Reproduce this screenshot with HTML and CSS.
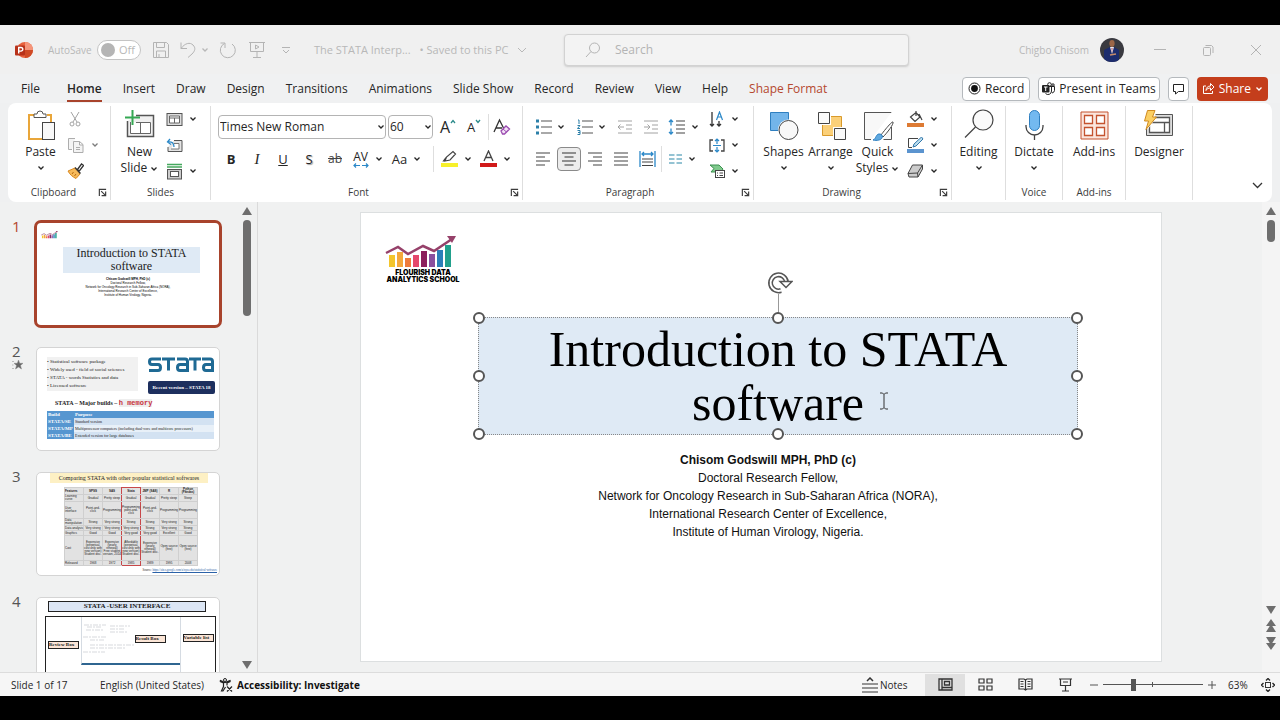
FILE: index.html
```html
<!DOCTYPE html>
<html lang="en">
<head>
<meta charset="utf-8">
<title>The STATA Interp... - PowerPoint</title>
<link rel="stylesheet" href="styles.css">
</head>
<body>
<svg class="defs" aria-hidden="true">
  <symbol id="chev" viewBox="0 0 8 6"><path d="M1.5 1.5 4 4l2.500-2.500" fill="none" stroke="currentColor" stroke-width="1.300"/></symbol>
  <symbol id="launch" viewBox="0 0 10 10"><path d="M1.500 9V1.500H9M3.500 3.500 8 8M8.500 4v4.500H4" fill="none" stroke="currentColor" stroke-width="1.300"/></symbol>
  <symbol id="up" viewBox="0 0 10 8"><path d="M5 0 10 8H0z" fill="currentColor"/></symbol>
  <symbol id="down" viewBox="0 0 10 8"><path d="M5 8 10 0H0z" fill="currentColor"/></symbol>
  <symbol id="brand" viewBox="0 0 76 36">
    <path d="M4 20h6v12H4z" fill="#f3c52c"/><path d="M12 17h6v15h-6z" fill="#f4a83c"/><path d="M20 23h6v9h-6z" fill="#ee7b3a"/><path d="M28 20h6v12h-6z" fill="#e5476b"/><path d="M36 16h6v16h-6z" fill="#8c1f5c"/><path d="M44 19h6v13h-6z" fill="#8a4f9e"/><path d="M52 15h6v17h-6z" fill="#2b7fb8"/><path d="M60 10h6v22h-6z" fill="#21a08c"/>
    <path d="M1 18 13 12l10 7 15-8 11 5 18-12" fill="none" stroke="#96416a" stroke-width="2.500"/><path d="M62 1h9l-4 7z" fill="#96416a"/>
  </symbol>
</svg>

<div class="app">
<header class="titlebar">
  <svg class="applogo" viewBox="0 0 18 18"><circle cx="10" cy="9" r="8" fill="#e8613d"/><path d="M10 1a8 8 0 0 1 8 8h-8z" fill="#f5957a"/><path d="M10 17a8 8 0 0 0 8-8h-8z" fill="#cf4a25"/><rect y="4.500" width="10" height="10" rx="1" fill="#b8321a"/><path d="M3.700 12.500v-6H6a1.800 1.800 0 0 1 0 3.600H3.700" fill="none" stroke="#fff" stroke-width="1.400"/></svg>
  <label class="autosave" for="autosave">AutoSave</label>
  <button class="toggle" id="autosave" role="switch" aria-checked="false"><i></i>Off</button>
  <div class="qat">
    <button aria-label="Save"><svg width="18" height="18" viewBox="0 0 18 18"><path d="M1.500 1.500h13l2 2v13h-15zM4.500 1.500v5h8v-5M4.500 16v-6h9v6M7 16v-3" /></svg></button>
    <button class="undo" aria-label="Undo"><svg width="18" height="18" viewBox="0 0 18 18"><path d="M2 1.500v6h6M2 7.500C6 2 11 1 14 4s2 6-1 9l-4 3.500"/></svg><svg class="chev"><use href="#chev"/></svg></button>
    <button aria-label="Redo"><svg width="18" height="18" viewBox="0 0 18 18"><path d="M5.500 2.500A7.500 7.500 0 1 0 13 3M1.500 2h4.500v5"/></svg></button>
    <button class="present" aria-label="From beginning"><svg width="18" height="18" viewBox="0 0 18 18"><path d="M1 1.500h16M2.500 1.500v9h13v-9M9 10.500v6M5 16.500h8M7.500 4v4l3.500-2z"/></svg></button>
    <button class="more" aria-label="Customize"><svg width="10" height="10" viewBox="0 0 10 10"><path d="M1 2.500h8M2 5l3 3 3-3"/></svg></button>
  </div>
  <button class="docname"><span>The STATA Interp...</span><span>• Saved to this PC</span><svg width="10" height="6" viewBox="0 0 10 6"><path d="m1 1 4 4 4-4" fill="none" stroke="currentColor"/></svg></button>
  <label class="search"><svg width="16" height="16" viewBox="0 0 16 16"><circle cx="9.500" cy="6" r="5"/><path d="M6 9.500 1 15"/></svg><input type="text" placeholder="Search" aria-label="Search"></label>
  <div class="account"><span>Chigbo Chisom</span>
    <svg width="24" height="24" viewBox="0 0 24 24"><defs><clipPath id="av"><circle cx="12" cy="12" r="12"/></clipPath></defs><g clip-path="url(#av)"><path d="M0 0h24v24H0z" fill="#3a3a40"/><path d="M4 24V12l6-3h4l5 3v12z" fill="#1c2c6e"/><path d="m10 9 2 7 2-7z" fill="#e8e8f0"/><path d="m11.500 10 .5 5 .5-5z" fill="#a33"/><ellipse cx="12" cy="5.500" rx="2.600" ry="3.400" fill="#9c6647"/><path d="m10 17 6-1" stroke="#c48a6a" stroke-width="1.500"/></g></svg>
  </div>
  <div class="winctl">
    <button aria-label="Minimize"><svg width="12" height="12" viewBox="0 0 12 12"><path d="M0 5.500h12"/></svg></button>
    <button aria-label="Restore"><svg width="12" height="12" viewBox="0 0 12 12"><rect x="1.500" y="3.500" width="7" height="8" rx="1"/><path d="M3.500 1.500h6l1.500 1.500v6"/></svg></button>
    <button aria-label="Close"><svg width="12" height="12" viewBox="0 0 12 12"><path d="m1 1 10 10M11 1 1 11"/></svg></button>
  </div>
</header>

<nav class="tabs">
  <button>File</button><button class="active">Home</button><button>Insert</button><button>Draw</button><button>Design</button><button>Transitions</button><button>Animations</button><button>Slide Show</button><button>Record</button><button>Review</button><button>View</button><button>Help</button><button class="context">Shape Format</button>
  <div class="actions">
    <button class="outlined"><svg width="13" height="13" viewBox="0 0 13 13"><circle cx="6.500" cy="6.500" r="5.500" fill="none" stroke="#222"/><circle cx="6.500" cy="6.500" r="3.400" fill="#111"/></svg>Record</button>
    <button class="outlined teams"><svg width="13" height="13" viewBox="0 0 13 13"><circle cx="7.500" cy="2.500" r="1.800" fill="none" stroke="#222"/><circle cx="11" cy="3" r="1.200" fill="none" stroke="#222"/><path d="M6 4.500h6.500v4A3 3 0 0 1 10 11M9.500 5v4a3.500 3.500 0 0 1-6 2.500" fill="none" stroke="#222"/><rect y="3" width="7.500" height="7.500" rx="1" fill="#222"/><path d="M2 5h3.500M3.700 5v4" stroke="#fff"/></svg>Present in Teams</button>
    <button class="outlined comment" aria-label="Comments"><svg width="13" height="12" viewBox="0 0 13 12"><path d="M1.500 1.500h10v7h-5l-3 2.500V8.500h-2z" fill="none" stroke="#222"/></svg></button>
    <button class="share"><svg width="13" height="13" viewBox="0 0 13 13"><path d="M4 4H1.500v7.500h9V9M4 8.500C4 5.500 6 4 8.500 4V1.500l3.500 3.500-3.500 3.500V6C6.500 6 5 6.500 4 8.500z" fill="none" stroke="#fff"/></svg>Share<svg class="chev"><use href="#chev"/></svg></button>
  </div>
</nav>

<section class="ribbon">
  <div class="group g-clip">
    <div class="tools">
      <button class="big"><svg width="32" height="32" viewBox="0 0 32 32"><path d="M9 6H4v24h13M22 6h4v7" fill="none" stroke="#e9a63a" stroke-width="2"/><path d="M9 8.500h12V5h-3a3 3 0 0 0-6 0H9z" fill="#fff" stroke="#555"/><rect x="17.500" y="13.500" width="12" height="17" fill="#f8f8f8" stroke="#444"/></svg><span>Paste</span><svg class="chev"><use href="#chev"/></svg></button>
      <div class="stack">
        <button class="off" aria-label="Cut"><svg width="16" height="16" viewBox="0 0 16 16"><path d="m4 1 6 10M12 1 6 11" fill="none" stroke="#666"/><circle cx="5" cy="13" r="2" fill="none" stroke="#666"/><circle cx="11" cy="13" r="2" fill="none" stroke="#666"/></svg></button>
        <button class="off" aria-label="Copy"><svg width="18" height="16" viewBox="0 0 18 16"><path d="M5 12.500H1.500v-11H8M6.500 4.500h6l3.500 3v8H6.500zM12.500 4.500v3.500H16M9 10.500h4M9 12.500h4" fill="#eee" stroke="#777"/></svg><svg class="chev"><use href="#chev"/></svg></button>
        <button aria-label="Format painter"><svg width="17" height="16" viewBox="0 0 17 16"><path d="m1 8 7-3 5 6-4 4.500C6 14 3 12 1 8z" fill="#f6b95a" stroke="#d98a22"/><path d="m5 11 1.500-2M7.500 13 9 11" stroke="#b56a10"/><path d="m8 4.500 5.500 6M10.500 6.500 14.500 1l2 1.500-4.500 6z" fill="#fff" stroke="#333" stroke-width="1.300"/></svg></button>
      </div>
    </div>
    <footer>Clipboard<svg class="launch"><use href="#launch"/></svg></footer>
  </div>

  <div class="group g-slides">
    <div class="tools">
      <button class="big"><svg width="32" height="32" viewBox="0 0 32 32"><path d="M3.500 12v15.500h26v-21H12" fill="#f0f0f0" stroke="#555" stroke-width="1.500"/><path d="M6.500 13v11.500h20v-11H12M16.500 13.500v11" fill="#fff" stroke="#666"/><path d="M8.500 1v15M1 8.500h15" stroke="#35a853" stroke-width="2"/></svg><span>New</span><span>Slide <svg class="chev"><use href="#chev"/></svg></span></button>
      <div class="stack">
        <button aria-label="Layout"><svg width="17" height="15" viewBox="0 0 17 15"><rect x="1" y="1.500" width="15" height="12" fill="#ddd" stroke="#555"/><path d="M3.500 4h10v7h-10zM3.500 6h10M8.500 6v5" fill="#fff" stroke="#666"/></svg><svg class="chev"><use href="#chev"/></svg></button>
        <button aria-label="Reset"><svg width="17" height="15" viewBox="0 0 17 15"><path d="M8 2.500h8v11H2V9" fill="#e4e4e4" stroke="#555"/><path d="M8 5.500h5v5.500H5" fill="#fff" stroke="#777"/><path d="M4 1 1.500 4 5 6.500M2 4c4-.5 6 1 6 5" fill="none" stroke="#2b88c8" stroke-width="1.300"/></svg></button>
        <button aria-label="Section"><svg width="17" height="17" viewBox="0 0 17 17"><path d="M1 1.500h15M1 4h15" stroke="#45a85e" stroke-width="1.500"/><rect x="1.500" y="6.500" width="14" height="9.500" fill="#ccc" stroke="#555"/><rect x="4.500" y="8.500" width="8" height="5" fill="#fff" stroke="#555"/></svg><svg class="chev"><use href="#chev"/></svg></button>
      </div>
    </div>
    <footer>Slides</footer>
  </div>

  <div class="group g-font">
    <div class="tools rows">
      <div class="row">
        <span class="combo family"><select aria-label="Font"><option>Times New Roman</option></select><svg class="chev"><use href="#chev"/></svg></span>
        <span class="combo size"><select aria-label="Font size"><option>60</option></select><svg class="chev"><use href="#chev"/></svg></span>
        <button class="ic grow" aria-label="Increase font size">A<svg width="6" height="5" viewBox="0 0 6 5"><path d="m1 4 2-2.500L5 4" fill="none" stroke="#2b8a8a" stroke-width="1.300"/></svg></button>
        <button class="ic shrink" aria-label="Decrease font size">A<svg width="6" height="5" viewBox="0 0 6 5"><path d="m1 1 2 2.500L5 1" fill="none" stroke="#2b8a8a" stroke-width="1.300"/></svg></button>
        <i class="sep"></i>
        <button class="ic clear" aria-label="Clear formatting"><svg width="18" height="18" viewBox="0 0 18 18"><path d="M1 14 6.500 2 11 11M3 10h6" fill="none" stroke="#333" stroke-width="1.300"/><path d="m8 13 5-5 3.500 3-5 5H9.500z" fill="#f2e2f6" stroke="#9b4bb0" stroke-width="1.300"/><path d="m10 11 3.500 3" stroke="#9b4bb0"/></svg></button>
      </div>
      <div class="row">
        <button class="ic b">B</button><button class="ic i">I</button><button class="ic u">U</button><button class="ic s">S</button><button class="ic st">ab</button>
        <button class="ic wide" aria-label="Character spacing"><span class="av">AV<svg width="16" height="5" viewBox="0 0 16 5"><path d="M3 .5 1 2.500l2 2M1 2.500h6M9 2.500h6M13 .5l2 2-2 2" fill="none" stroke="#2b88c8" stroke-width="1.200"/></svg></span><svg class="chev"><use href="#chev"/></svg></button>
        <button class="ic wide case">Aa<svg class="chev"><use href="#chev"/></svg></button>
        <i class="sep"></i>
        <button class="ic wide" aria-label="Highlight"><svg width="17" height="18" viewBox="0 0 17 18"><path d="M4 11 5.500 7 12 1.500l2.500 2.500L9 10z M4 11H2.500L5 7.500" fill="#fff" stroke="#444" stroke-width="1.200"/><path d="M0 13h17v4H0z" fill="#f7f02a"/></svg><svg class="chev"><use href="#chev"/></svg></button>
        <button class="ic wide" aria-label="Font colour"><svg width="17" height="18" viewBox="0 0 17 18"><path d="m4 11 4.500-10L13 11M5.500 7.500h6" fill="none" stroke="#444" stroke-width="1.300"/><path d="M0 13h17v4H0z" fill="#d11a1a"/></svg><svg class="chev"><use href="#chev"/></svg></button>
      </div>
    </div>
    <footer>Font<svg class="launch"><use href="#launch"/></svg></footer>
  </div>

  <div class="group g-para">
    <div class="tools">
      <div class="rows">
        <div class="row">
          <button class="ic list" aria-label="Bullets"><svg width="16" height="16" viewBox="0 0 16 16"><path d="M0 2h3M0 8h3M0 14h3" stroke="#2b7fa8" stroke-width="3"/><path d="M5 2h11M5 8h11M5 14h11" stroke="#555" stroke-width="1.200"/></svg><svg class="chev"><use href="#chev"/></svg></button>
          <button class="ic list" aria-label="Numbering"><svg width="16" height="16" viewBox="0 0 16 16"><path d="M1 1h1v4M.5 6.500H3L.5 9.500H3M.5 11.500H3v4H.5M1 13.500h2" fill="none" stroke="#2b7fa8"/><path d="M5 2h11M5 8h11M5 14h11" stroke="#555" stroke-width="1.200"/></svg><svg class="chev"><use href="#chev"/></svg></button>
          <button class="ic off" aria-label="Outdent"><svg width="16" height="14" viewBox="0 0 16 14"><path d="M1 1h14M9 5h6M9 9h6M1 13h14M7 7H1M3.500 4.500 1 7l2.500 2.500" fill="none" stroke="#666"/></svg></button>
          <button class="ic off" aria-label="Indent"><svg width="16" height="14" viewBox="0 0 16 14"><path d="M1 1h14M9 5h6M9 9h6M1 13h14M1 7h6M4.500 4.500 7 7 4.500 9.500" fill="none" stroke="#666"/></svg></button>
          <button class="ic wide" aria-label="Line spacing"><svg width="17" height="16" viewBox="0 0 17 16"><path d="M3 1v5.500M1 3l2-2 2 2M3 9.500V15M1 13l2 2 2-2" fill="none" stroke="#2b88c8" stroke-width="1.300"/><path d="M8 2h9M8 6h9M8 10h9M8 14h9" stroke="#444" stroke-width="1.200"/></svg><svg class="chev"><use href="#chev"/></svg></button>
        </div>
        <div class="row">
          <button class="ic" aria-label="Align left"><svg width="16" height="14" viewBox="0 0 16 14"><path d="M1 1h14M1 5h9M1 9h14M1 13h9" stroke="#444" stroke-width="1.200"/></svg></button>
          <button class="ic pressed" aria-label="Center" aria-pressed="true"><svg width="16" height="14" viewBox="0 0 16 14"><path d="M1 1h14M3.500 5h9M1 9h14M3.500 13h9" stroke="#333" stroke-width="1.200"/></svg></button>
          <button class="ic" aria-label="Align right"><svg width="16" height="14" viewBox="0 0 16 14"><path d="M1 1h14M6 5h9M1 9h14M6 13h9" stroke="#444" stroke-width="1.200"/></svg></button>
          <button class="ic" aria-label="Justify"><svg width="16" height="14" viewBox="0 0 16 14"><path d="M1 1h14M1 5h14M1 9h14M1 13h14" stroke="#444" stroke-width="1.200"/></svg></button>
          <button class="ic" aria-label="Distribute"><svg width="17" height="16" viewBox="0 0 17 16"><path d="M1 0v16M16 0v16M3 3h11M5 1 3 3l2 2M12 1l2 2-2 2" fill="none" stroke="#2b88c8" stroke-width="1.300"/><path d="M3 8h11M3 11h11M3 14.500h11" stroke="#444" stroke-width="1.200"/></svg></button>
          <i class="sep"></i>
          <button class="ic wide" aria-label="Columns"><svg width="13" height="10" viewBox="0 0 13 10"><path d="M0 1h5.500M7.500 1H13M0 5h5.500M7.500 5H13M0 9h5.500M7.500 9H13" stroke="#2b88a8" stroke-width="1.200"/></svg><svg class="chev"><use href="#chev"/></svg></button>
        </div>
      </div>
      <div class="stack">
        <button aria-label="Text direction"><svg width="16" height="17" viewBox="0 0 16 17"><path d="M3 1v14M1 13l2 2 2-2M10 10v5M8 13l2 2 2-2" fill="none" stroke="#333" stroke-width="1.300"/><path d="m7.500 9 3-8 3 8M8.500 6h4" fill="none" stroke="#2b88c8" stroke-width="1.200"/></svg><svg class="chev"><use href="#chev"/></svg></button>
        <button aria-label="Align text"><svg width="16" height="15" viewBox="0 0 16 15"><path d="M4 2H1v11h3M12 2h3v11h-3" fill="none" stroke="#444" stroke-width="1.300"/><path d="M8 1v5M6 3l2-2 2 2M8 9v5M6 12l2 2 2-2M4 7.500h8" fill="none" stroke="#2b88c8" stroke-width="1.200"/></svg><svg class="chev"><use href="#chev"/></svg></button>
        <button aria-label="SmartArt"><svg width="16" height="14" viewBox="0 0 16 14"><path d="M1 1h9l4 4-2 3H2l3-3.500z" fill="#7fc98c" stroke="#3c9150"/><rect x="6.500" y="6.500" width="9" height="7" fill="#fff" stroke="#444"/><path d="M8 9h1M10.500 9H14M8 11.500h1M10.500 11.500H14" stroke="#444"/></svg><svg class="chev"><use href="#chev"/></svg></button>
      </div>
    </div>
    <footer>Paragraph<svg class="launch"><use href="#launch"/></svg></footer>
  </div>

  <div class="group g-draw">
    <div class="tools">
      <button class="big"><svg width="32" height="32" viewBox="0 0 32 32"><path d="M2.500 3.500h18v18h-18z" fill="#73b5ea" stroke="#2f7fc0"/><circle cx="20.500" cy="21" r="10.500" fill="#fff"/><circle cx="20.500" cy="21" r="9.500" fill="#f8f8f8" stroke="#444"/></svg><span>Shapes</span><svg class="chev"><use href="#chev"/></svg></button>
      <button class="big"><svg width="32" height="32" viewBox="0 0 32 32"><path d="M7.500 7.500h19v19h-19z" fill="#fbd079" stroke="#d99a2b"/><path d="M3 3h13v13H3zM18 18h13v13H18z" fill="#fff"/><path d="M3.500 3.500h11v11h-11zM19.500 19.500h11v11h-11z" fill="#fafafa" stroke="#444"/></svg><span>Arrange</span><svg class="chev"><use href="#chev"/></svg></button>
      <button class="big"><svg width="32" height="32" viewBox="0 0 32 32"><path d="M29 4v-.5H2.500v27H9M29.500 18v12.500h-8" fill="#f8f8f8" stroke="#555"/><path d="M31 13c-1-1-9 9-12 13l2 2c4-4 11-13 10-15z" fill="#fff" stroke="#444"/><path d="M11 31c3-1 3-6 6-6s4 2 3 4-5 3-9 2z" fill="#5fa9e0" stroke="#2f7fc0"/></svg><span>Quick</span><span>Styles <svg class="chev"><use href="#chev"/></svg></span></button>
      <div class="stack">
        <button aria-label="Shape fill"><svg width="17" height="16" viewBox="0 0 17 16"><path d="m3.500 6 5.500-4.500L13 6l-5 4.500zM9 5V0M12 3l3 6" fill="none" stroke="#444" stroke-width="1.200"/><path d="M0 12h17v4H0z" fill="#dd7a33"/></svg><svg class="chev"><use href="#chev"/></svg></button>
        <button aria-label="Shape outline"><svg width="17" height="16" viewBox="0 0 17 16"><path d="M11 1.500H1.500v9H5" fill="none" stroke="#444"/><path d="m6 10 1-3 7.500-7L16 2 9 9z" fill="#bde" stroke="#3377aa"/><path d="M0 12h17v4H0z" fill="#5b94cf"/></svg><svg class="chev"><use href="#chev"/></svg></button>
        <button aria-label="Shape effects"><svg width="17" height="14" viewBox="0 0 17 14"><path d="M1 9.500 5.500 1h10v4L11 13H2z" fill="#ccc" stroke="#444"/><path d="m1 9.500 9.500-.5 5-8M10.500 9l.5 4" fill="none" stroke="#444"/></svg><svg class="chev"><use href="#chev"/></svg></button>
      </div>
    </div>
    <footer>Drawing<svg class="launch"><use href="#launch"/></svg></footer>
  </div>

  <div class="group g-edit">
    <div class="tools"><button class="big"><svg width="32" height="32" viewBox="0 0 32 32"><circle cx="20" cy="11" r="10" fill="#fafafa" stroke="#444" stroke-width="1.200"/><path d="M12.500 18 2 28.500" stroke="#444" stroke-width="1.300"/></svg><span>Editing</span><svg class="chev"><use href="#chev"/></svg></button></div>
    <footer></footer>
  </div>
  <div class="group g-voice">
    <div class="tools"><button class="big"><svg width="32" height="32" viewBox="0 0 32 32"><rect x="11.500" y="1.500" width="10" height="20" rx="5" fill="#73b9f0" stroke="#2f7fc0"/><path d="M8 16v1.500a8.500 8.500 0 0 0 17 0V16M16.500 26v5" fill="none" stroke="#444" stroke-width="1.300"/></svg><span>Dictate</span><svg class="chev"><use href="#chev"/></svg></button></div>
    <footer>Voice</footer>
  </div>
  <div class="group g-add">
    <div class="tools"><button class="big"><svg width="32" height="32" viewBox="0 0 32 32"><path d="M3 3h27v27H3z" fill="#fbe6de" stroke="#c4532f"/><path d="M6.500 6.500h8v8h-8zM18.500 6.500h8v8h-8zM6.500 18.500h8v8h-8zM18.500 18.500h8v8h-8z" fill="#fff" stroke="#c4532f" stroke-width="1.300"/></svg><span>Add-ins</span></button></div>
    <footer>Add-ins</footer>
  </div>
  <div class="group g-design">
    <div class="tools"><button class="big"><svg width="32" height="32" viewBox="0 0 32 32"><path d="M3.500 5.500h26v21h-26z" fill="#ddd" stroke="#555"/><path d="M6.500 8.500h20v15h-20zM7 13.500h20M21.500 13.500v10" fill="#fff" stroke="#555" stroke-width="1.300"/><path d="M2 4h11l-3 9-5 7H2z" fill="#fff"/><path d="M4.500 1.500H12L9.500 8h4L3 20.500 5.500 12h-4z" fill="#fbcf63" stroke="#d08a20"/></svg><span>Designer</span></button></div>
    <footer></footer>
  </div>
  <button class="collapse" aria-label="Collapse ribbon"><svg width="11" height="7" viewBox="0 0 11 7"><path d="m1 1 4.500 4.500L10 1" fill="none" stroke="#333" stroke-width="1.300"/></svg></button>
</section>

<main class="work">
  <ol class="thumbs">
    <li class="current"><span class="num">1</span>
      <div class="thumb t1">
        <svg class="minilogo"><use href="#brand"/></svg>
        <h3>Introduction to STATA<br>software</h3>
        <p><b>Chisom Godswill MPH, PhD (c)</b><br>Doctoral Research Fellow,<br>Network for Oncology Research in Sub-Saharan Africa (NORA),<br>International Research Center of Excellence,<br>Institute of Human Virology, Nigeria.</p>
      </div></li>
    <li><span class="num">2<svg width="11" height="10" viewBox="0 0 11 10"><path d="m6.500 0 1.200 3.300H11L8.500 5.500l1 3.500-3-2-3 2 1-3.500L2 3.300h3.300zM0 1.500h2M0 5h1.500M0 8.500h2" fill="#666" stroke="#888" stroke-width=".5"/></svg></span>
      <div class="thumb t2">
        <div class="t2top">
          <ul><li>• Statistical software package</li><li>• Widely used - field of social sciences</li><li>• STATA - words Statistics and data</li><li>• Licensed software</li></ul>
          <div class="t2right"><svg width="66" height="16" viewBox="0 0 66 16"><g fill="none" stroke="#1f6a94" stroke-width="3"><path d="M13 2H4Q1.500 2 1.500 4.700T4 7.500h6q2.500 0 2.500 3t-2.500 3H1M14 2h13M20.500 2v11.500M29 2h8q2.500 0 2.500 2.500v10.500M39 7.500h-7q-2.500 0-2.500 3t2.500 3h7M41 2h12M47 2v11.500M54 2h8q2.500 0 2.500 2.500v10.500M64 7.500h-6q-2.500 0-2.500 3t2.500 3h6"/></g></svg><span>Recent version – STATA 18</span></div>
        </div>
        <p class="builds">STATA – Major builds – <code>h memory</code></p>
        <table><tr><th>Build</th><th>Purpose</th></tr><tr><th>STATA/SE</th><td>Standard version</td></tr><tr><th>STATA/MP</th><td>Multiprocessor computers (including dual-core and multicore processors)</td></tr><tr><th>STATA/BE</th><td>Extended version for large databases</td></tr></table>
      </div></li>
    <li><span class="num">3</span>
      <div class="thumb t3">
        <h3>Comparing STATA with other popular statistical softwares</h3>
        <table>
          <tr><th>Features</th><th>SPSS</th><th>SAS</th><th class="hl">Stata</th><th>JMP (SAS)</th><th>R</th><th>Python (Pandas)</th></tr>
          <tr class="h7"><td>Learning curve</td><td>Gradual</td><td>Pretty steep</td><td class="hl">Gradual</td><td>Gradual</td><td>Pretty steep</td><td>Steep</td></tr>
          <tr class="h17"><td>User interface</td><td>Point-and-click</td><td>Programming</td><td class="hl">Programming point-and-click</td><td>Point-and-click</td><td>Programming</td><td>Programming</td></tr>
          <tr class="h7"><td>Data manipulation</td><td>Strong</td><td>Very strong</td><td class="hl">Strong</td><td>Strong</td><td>Very strong</td><td>Strong</td></tr>
          <tr class="h5"><td>Data analysis</td><td>Very strong</td><td>Very strong</td><td class="hl">Very strong</td><td>Strong</td><td>Very strong</td><td>Strong</td></tr>
          <tr class="h5"><td>Graphics</td><td>Good</td><td>Good</td><td class="hl">Very good</td><td>Very good</td><td>Excellent</td><td>Good</td></tr>
          <tr class="h25"><td>Cost</td><td>Expensive (perpetual, cost only with new version) Student disc.</td><td>Expensive (yearly renewal) Free student version, 2014</td><td class="hl">Affordable (perpetual, cost only with new version) Student disc.</td><td>Expensive (yearly renewal) Student disc.</td><td>Open source (free)</td><td>Open source (free)</td></tr>
          <tr class="h5"><td>Released</td><td>1968</td><td>1972</td><td class="hl">1985</td><td>1989</td><td>1995</td><td>2008</td></tr>
        </table>
        <p>Source: <a href="#">https://sites.google.com/a/nyu.edu/statistical-software</a></p>
      </div></li>
    <li><span class="num">4</span>
      <div class="thumb t4">
        <h3>STATA -USER INTERFACE</h3>
        <div class="shot">
          <div class="pane"><span class="tag">Review Box</span></div>
          <div class="pane mid"><svg width="60" height="34" viewBox="0 0 60 34"><path d="M2 2h22M5 4h14M4 7h18M28 3h20M28 6h14M28 9h18M1 14h24M8 17h14M8 22h44M8 25h36M1 29h22" stroke="#c5c9cf" stroke-width=".7" stroke-dasharray="5 1 2 1"/></svg><span class="tag">Result Box</span></div>
          <div class="pane"><span class="tag">Variable list</span></div>
        </div>
      </div></li>
  </ol>
  <div class="vscroll left"><svg width="10" height="8"><use href="#up"/></svg><i></i><svg width="10" height="8"><use href="#down"/></svg></div>
  <section class="canvas">
    <article class="slide">
      <div class="brand"><svg width="76" height="34" viewBox="0 0 76 34"><use href="#brand" width="76" height="36"/></svg><b>FLOURISH DATA<br>ANALYTICS SCHOOL</b></div>
      <div class="titlebox">
        <h1>Introduction to STATA<br>software</h1>
        <svg class="rotate" width="26" height="22" viewBox="0 0 26 22"><path d="M19.500 10A8 8 0 1 0 14 18.500" fill="none" stroke="#555" stroke-width="5"/><path d="M19.500 10A8 8 0 1 0 14 18.500" fill="none" stroke="#fff" stroke-width="2"/><path d="M13 9.500h12l-6 6z" fill="#fff" stroke="#555" stroke-width="1.500"/></svg>
        <i class="stem"></i>
        <i class="h nw"></i><i class="h n"></i><i class="h ne"></i><i class="h w"></i><i class="h e"></i><i class="h sw"></i><i class="h s"></i><i class="h se"></i>
        <svg class="caret" width="10" height="18" viewBox="0 0 10 18"><path d="M1 1h2.500L5 2.500 6.500 1H9M5 2.500v13M1 17h2.500L5 15.500 6.500 17H9" fill="none" stroke="#333"/></svg>
      </div>
      <p class="sub"><b>Chisom Godswill MPH, PhD (c)</b><br>Doctoral Research Fellow,<br>Network for Oncology Research in Sub-Saharan Africa (NORA),<br>International Research Center of Excellence,<br>Institute of Human Virology, Nigeria.</p>
    </article>
  </section>
  <div class="vscroll right"><svg width="10" height="8"><use href="#up"/></svg><i></i><svg width="10" height="8"><use href="#down"/></svg><svg width="10" height="13" viewBox="0 0 10 13"><path d="m5 0 5 7H0zM5 5l5 8H0z" fill="currentColor"/></svg><svg width="10" height="13" viewBox="0 0 10 13"><path d="M5 8 0 0h10zM5 13 0 6h10z" fill="currentColor"/></svg></div>
</main>

<footer class="status">
  <span class="count">Slide 1 of 17</span>
  <span class="lang">English (United States)</span>
  <button class="a11y"><svg width="14" height="14" viewBox="0 0 14 14"><circle cx="6" cy="2" r="1.500" fill="none" stroke="#222"/><path d="M1 3.500 4.500 5v3.500L2.500 13 4 13l2.500-4M11.500 3.500 8 5v2.500M8 8.500l5 5M13 8.500l-5 5M1 3.500 1.500 2.500 6 4.500 11 2.500l.5 1" fill="none" stroke="#222" stroke-width="1.200"/></svg>Accessibility: Investigate</button>
  <div class="views">
    <button class="notes"><svg width="16" height="16" viewBox="0 0 16 16"><path d="m5 4 3-3 3 3" fill="none" stroke="#333" stroke-width="1.500"/><path d="M0 7h16M0 11h16M0 15h16" stroke="#333" stroke-width="1.200"/></svg>Notes</button>
    <button class="view on" aria-label="Normal"><svg width="15" height="13" viewBox="0 0 15 13"><path d="M1 1h13v11H1zM4 1v11M4 9.500h10M6.500 3.500h5v3.500h-5z" fill="none" stroke="#333" stroke-width="1.300"/></svg></button>
    <button class="view" aria-label="Slide sorter"><svg width="15" height="13" viewBox="0 0 15 13"><path d="M1 1h5v4H1zM9 1h5v4H9zM1 8h5v4H1zM9 8h5v4H9z" fill="none" stroke="#333" stroke-width="1.200"/></svg></button>
    <button class="view" aria-label="Reading view"><svg width="15" height="13" viewBox="0 0 15 13"><path d="M7.500 2 6 1H1v10h5l1.500 1L9 11h5V1H9zM7.500 2v10M2.500 3.500h3M2.500 6h3M2.500 8.500h3M9.500 3.500h3M9.500 6h3M9.500 8.500h3" fill="none" stroke="#333" stroke-width="1.200"/></svg></button>
    <button class="view" aria-label="Slide show"><svg width="13" height="14" viewBox="0 0 13 14"><path d="M0 1h13M1.500 1v6.500h10V1M6.500 7.500V13M3 13h7M4 4h5" fill="none" stroke="#333" stroke-width="1.200"/></svg></button>
    <button class="zb" aria-label="Zoom out"><svg width="8" height="8" viewBox="0 0 8 8"><path d="M0 4h8" stroke="#555"/></svg></button>
    <span class="zoom"><input type="range" min="10" max="190" value="63" aria-label="Zoom"></span>
    <button class="zb" aria-label="Zoom in"><svg width="8" height="8" viewBox="0 0 8 8"><path d="M0 4h8M4 0v8" stroke="#555"/></svg></button>
    <span class="pct">63%</span>
    <button class="fit" aria-label="Fit slide"><svg width="14" height="14" viewBox="0 0 14 14"><rect x="4.500" y="4.500" width="5" height="5" fill="none" stroke="#333"/><path d="m5 2.500 2-2 2 2M5 11.500l2 2 2-2M2.500 5l-2 2 2 2M11.500 5l2 2-2 2" fill="none" stroke="#222" stroke-width="1.300"/></svg></button>
  </div>
</footer>
</div>
</body>
</html>
```
FILE: styles.css
```css
* { box-sizing: border-box; }
body {
  margin: 0;
  height: 100vh;
  padding: 25px 0 24px;
  background: #000;
  color: #262626;
  font: 12px/16px "Open Sans", "Noto Sans", sans-serif;
}
.app {
  height: 100%;
  display: flex;
  flex-direction: column;
  overflow: hidden;
  background: #eff0f1;
}
button { font: inherit; color: inherit; background: none; border: 0; padding: 0; margin: 0; }
svg { flex: none; }
p, h1, h3, ol, ul { margin: 0; padding: 0; list-style: none; }
.defs { position: absolute; width: 0; height: 0; }
.chev { width: 8px; height: 6px; }

/* Title bar */
.titlebar {
  flex: none;
  height: 49px;
  display: flex;
  align-items: center;
  background: #f0f0f0;
  color: #b8b8b8;
  padding-left: 15px;
  font-size: 11px;
}
.applogo { width: 18px; height: 18px; }
.autosave { margin-left: 15px; width: 49px; white-space: nowrap; font-size: 10px; }
.toggle {
  width: 44px; height: 20px;
  border: 1px solid #c4c4c4; border-radius: 10px;
  background: #fff;
  display: flex; align-items: center; gap: 4px; padding-left: 3px;
}
.toggle i { width: 14px; height: 14px; border-radius: 50%; background: #b5b5b5; }
.qat { display: flex; margin-left: 4px; }
.qat button { width: 31px; display: flex; align-items: center; justify-content: center; gap: 4px; }
.qat .undo { width: 36px; }
.qat .present { width: 27px; }
.qat .more { width: 32px; }
.qat svg, .winctl svg { fill: none; stroke: #b4b4b4; stroke-width: 1; }
.docname { display: flex; align-items: center; gap: 9px; margin-left: 12px; width: 250px; white-space: nowrap; }
.search {
  width: 345px; height: 32px;
  display: flex; align-items: center; gap: 12px;
  padding-left: 20px;
  border: 1px solid #d2d2d2; border-radius: 4px;
  background: #f3f3f3;
  box-shadow: 0 1px 2px #ccc;
}
.search svg { fill: none; stroke: #b4b4b4; }
.search input { flex: 1; min-width: 0; border: 0; background: none; font: inherit; font-size: 12px; }
.search input::placeholder { color: #b4b4b4; }
.account { margin-left: auto; display: flex; align-items: center; gap: 11px; white-space: nowrap; font-size: 10px; }
.winctl { display: flex; margin-left: 12px; }
.winctl button { width: 48px; display: flex; justify-content: center; }

/* Tabs */
.tabs {
  flex: none;
  height: 29px;
  display: flex;
  align-items: center;
  gap: 21px;
  padding: 0 12px 0 21px;
  background: #f0f1f2;
  white-space: nowrap;
}
.tabs > button { height: 26px; padding-top: 3px; border-bottom: 2px solid transparent; }
.tabs > .active { margin-left: 6px; font-weight: 600; border-color: #a8432c; }
.tabs > .context { color: #b5482f; }
.actions { display: flex; gap: 8px; margin-left: auto; }
.actions button { height: 24px; display: flex; align-items: center; gap: 4px; padding: 0 5px; border-radius: 4px; }
.outlined { border: 1px solid #b5b9bd; background: #fff; }
.actions .teams { padding: 0 3px; }
.actions .comment { width: 21px; padding: 0 3px; }
.actions .share { background: #c43e1c; color: #fff; }

/* Ribbon */
.ribbon {
  flex: none;
  margin: 0 8px;
  background: #fff;
  border-radius: 8px;
  padding: 3px 0 2px;
  display: flex;
}
.group { flex: none; border-right: 1px solid #dedede; display: flex; flex-direction: column; }
.g-clip { width: 103px; padding-left: 14px; }
.g-slides { width: 100px; padding-left: 8px; }
.g-font { width: 312px; }
.g-para { width: 231px; }
.g-draw { width: 198px; padding-left: 6px; }
.g-edit { width: 54px; }
.g-voice { width: 57px; }
.g-add { width: 63px; }
.g-design { width: 67px; }
.tools { height: 78px; display: flex; }
.group footer {
  height: 16px;
  position: relative;
  text-align: center;
  font-size: 10px;
  color: #3c3c3c;
}
.g-slides footer { padding-right: 8px; }
.g-clip footer { padding-right: 25px; }
.g-font footer, .g-para footer { padding-right: 16px; }
.g-draw footer { padding-right: 28px; }
.launch { position: absolute; right: 3px; top: 4px; width: 9px; height: 9px; }
.big { width: 47px; display: flex; flex-direction: column; align-items: center; padding-top: 3px; }
.big svg:first-child { margin-bottom: 3px; }
.big span { white-space: nowrap; font-size: 12px; }
.big span .chev { margin: 0; }
.big > .chev { margin-top: 5px; }
.g-clip .big { width: 37px; }
.g-clip .stack { margin-left: 8px; }
.g-slides .big { width: 41px; }
.g-slides .stack { margin-left: 6px; }
.g-edit .big, .g-voice .big, .g-add .big, .g-design .big { width: 100%; }
.stack { display: flex; flex-direction: column; }
.stack button { height: 26px; display: flex; align-items: center; gap: 6px; }
.off { opacity: .6; }
.rows { display: flex; flex-direction: column; padding-top: 5px; }
.row { height: 32px; display: flex; align-items: center; padding-left: 7px; }
.ic { width: 26px; height: 26px; display: flex; align-items: center; justify-content: center; flex: none; }
.sep { width: 1px; height: 26px; background: #dedede; margin: 0 1px; }
.g-font .row:nth-child(2) .sep { margin: 0 3px 0 7px; }
.g-font .clear { width: 24px; }
.wide { width: 39px; gap: 6px; }
.combo { position: relative; margin-right: 2px; }
.combo select {
  appearance: none;
  width: 100%; height: 24px;
  border: 1px solid #b4b4b4; border-radius: 4px;
  background: #fff; color: #262626;
  font: inherit;
  padding: 0 1px;
}
.combo .chev { position: absolute; right: 1px; top: 9px; }
.family { width: 168px; }
.size { width: 45px; }
.grow { font-size: 16px; align-items: center; }
.shrink { font-size: 13px; }
.grow svg, .shrink svg { align-self: flex-start; margin-top: 5px; }
.b { font-weight: 700; font-size: 13px; }
.i { font: italic 15px "Liberation Serif", serif; }
.u { text-decoration: underline; font-size: 13px; }
.s { font-size: 13px; text-shadow: 1px 1px 1px #999; }
.st { text-decoration: line-through; font-size: 12px; color: #444; }
.av { display: flex; flex-direction: column; align-items: center; line-height: 12px; }
.case { font-size: 13px; }
.list { width: 41px; gap: 5px; }
.pressed { width: 24px; height: 24px; margin: 0 1px; border: 1px solid #8a8a8a; border-radius: 4px; background: #ececec; }
.g-para .stack { margin-left: 6px; }
.g-draw .stack { margin-left: 6px; }
.collapse { margin: auto 9px 7px auto; }

/* Work area */
.work { flex: 1; min-height: 0; display: flex; background: #f0f1f1; }
.thumbs {
  width: 238px;
  overflow: hidden;
  padding: 20px 0 0 12px;
  display: flex;
  flex-direction: column;
  gap: 21px;
}
.thumbs > li { display: flex; flex: none; }
.num { width: 24px; font-size: 15px; line-height: 18px; color: #555; margin-top: -5px; display: flex; flex-direction: column; }
.current .num { color: #b5482f; }
.thumb {
  width: 184px; height: 104px;
  background: #fff;
  border: 1px solid #d4d4d4; border-radius: 5px;
  overflow: hidden;
  font-family: "Liberation Serif", serif;
  color: #222;
}
.current .thumb { outline: 3px solid #a8432c; outline-offset: -1px; border: 0; }
.minilogo { display: block; width: 18px; height: 12px; margin: 7px 0 0 5px; }
.t1 h3 { width: 137px; margin: 6px 0 0 27px; background: #dfeaf5; font-weight: 400; font-size: 12px; line-height: 13px; text-align: center; }
.t1 p { margin-top: 4px; font: 3px/4px "Liberation Sans", sans-serif; text-align: center; color: #000; }
.t2top { display: flex; justify-content: space-between; padding: 9px 4px 0 10px; }
.t2top ul { width: 91px; height: 34px; background: #f1f1f1; font-size: 5px; line-height: 8px; padding-top: 1px; white-space: nowrap; }
.t2right { width: 67px; display: flex; flex-direction: column; gap: 8px; }
.t2right span { height: 13px; border-radius: 2px; background: #1d2f5e; color: #fff; font-size: 5px; line-height: 13px; font-weight: 700; text-align: center; white-space: nowrap; }
.builds { margin: 5px 0 0 18px; font-size: 6px; line-height: 9px; font-weight: 700; }
.builds code { color: #c8303c; font: 700 7px/8px "Liberation Mono", monospace; background: #eee; }
.t2 table { width: 167px; margin: 3px 0 0 10px; table-layout: fixed; border-collapse: collapse; font-size: 4px; line-height: 7px; }
.t2 td, .t2 th { padding: 0 1px; text-align: left; white-space: nowrap; }
.t2 th { background: #5696d0; color: #fff; font-size: 5px; }
.t2 th:first-child { width: 27px; }
.t2 td { background: #d3e2f2; }
.t2 tr:nth-child(odd) td { background: #e8f0f8; }
.t3 h3 { width: 158px; margin-left: 13px; background: #fdf0c4; font-size: 6px; line-height: 10px; font-weight: 400; text-align: center; white-space: nowrap; }
.t3 table { width: 134px; margin: 4px 0 0 27px; table-layout: fixed; border-collapse: collapse; font: 3px/3px "Liberation Sans", sans-serif; background: #e2e2e2; }
.t3 td, .t3 th { padding: 0; height: 5px; border: 1px solid #cfcfcf; text-align: center; }
.t3 tr > :first-child { text-align: left; }
.t3 .h7 td { height: 7px; }
.t3 .h17 td { height: 17px; }
.t3 .h25 td { height: 25px; }
.t3 .hl { border-right-color: #c8484a; }
.t3 :has(+ .hl) { border-right-color: #c8484a; }
.t3 tr:first-child .hl { border-top-color: #c8484a; }
.t3 tr:last-child .hl { border-bottom-color: #c8484a; }
.t3 p { margin-top: 2px; padding-right: 2px; text-align: right; font-size: 3px; line-height: 4px; }
.t3 a { color: #2b62a8; }
.t4 h3 { width: 158px; margin: 3px 0 4px 11px; border: 1px solid #222; background: #dce6f5; font-size: 7px; line-height: 9px; text-align: center; }
.shot { display: flex; width: 171px; height: 86px; margin-left: 8px; border: 1px solid #222; }
.pane { flex: 1; padding-top: 17px; }
.pane + .pane + .pane { border-left: 1px solid #d5dbe2; }
.pane:first-child { padding-top: 24px; }
.pane.mid { flex: 0 0 99px; height: 48px; padding: 6px 0 0; display: flex; overflow: hidden; border-bottom: 2px solid #2f6590; border-left: 1px solid #d5dbe2; }
.mid .tag { margin: 12px 0 0 -7px; height: 8px; flex: none; }
.tag { display: block; margin-left: 2px; width: 31px; border: 1px solid #222; background: #fbe5d6; font-size: 5px; line-height: 6px; font-weight: 700; white-space: nowrap; }

.vscroll { display: flex; flex-direction: column; align-items: center; color: #6e6e6e; }
.vscroll i { width: 8px; border-radius: 4px; background: #6e6e6e; margin: 5px 0 auto; }
.left { width: 20px; padding: 5px 2px 3px 0; border-right: 1px solid #dadada; }
.left i { height: 96px; }
.right { width: 18px; padding: 5px 0 22px; background: #f4f4f4; }
.right i { height: 22px; }
.right svg + svg { margin-top: 5px; }

.canvas { flex: 1; display: flex; align-items: center; justify-content: center; min-width: 0; padding-left: 2px; }
.slide {
  width: 100%; max-width: 802px; aspect-ratio: 802 / 450;
  background: #fff;
  border: 1px solid #dcdfe0;
  padding-top: 22px;
}
.brand { width: 76px; margin-left: 24px; display: flex; flex-direction: column; align-items: center; }
.brand b { font: 900 7px/7px Inter, sans-serif; text-align: center; color: #000; white-space: nowrap; }
.titlebox {
  position: relative;
  width: 75%;
  height: 118px;
  margin: 34px 0 0 117px;
  background: #dfeaf5;
  border: 1px dotted #888;
  padding-top: 4px;
}
h1 { font: 400 50px/54px "Liberation Serif", serif; color: #000; text-align: center; }
.h { position: absolute; width: 12px; height: 12px; border: 2px solid #555; border-radius: 50%; background: #fff; transform: translate(-50%, -50%); }
.nw, .w, .sw { left: 0; } .n, .s { left: 50%; } .ne, .e, .se { left: 100%; }
.nw, .n, .ne { top: 0; } .w, .e { top: 50%; } .sw, .s, .se { top: 100%; }
.stem { position: absolute; left: 50%; bottom: 100%; width: 1px; height: 24px; background: #999; }
.rotate { position: absolute; left: calc(50% - 11px); top: -46px; }
.caret { position: absolute; left: 400px; top: 74px; }
.sub { margin-top: 16px; padding-left: 14px; font: 12px/18px "Liberation Sans", sans-serif; color: #111; text-align: center; }

/* Status bar */
.status {
  flex: none;
  height: 24px;
  display: flex;
  align-items: center;
  background: #f6f6f6;
  border-top: 1px solid #dcdcdc;
  padding-left: 11px;
  font-size: 10px;
  white-space: nowrap;
}
.count { width: 89px; }
.lang { width: 119px; }
.a11y { display: flex; align-items: center; gap: 4px; font-weight: 700; color: #111; }
.views { margin-left: auto; display: flex; align-items: center; align-self: stretch; }
.notes { display: flex; align-items: center; gap: 2px; width: 63px; }
.view { width: 40px; height: 22px; display: flex; align-items: center; justify-content: center; }
.on { background: #e0e0e0; }
.zb { width: 18px; display: flex; justify-content: center; }
.zoom { display: flex; width: 100px; background: linear-gradient(#555, #555) 49px 50% / 1px 5px no-repeat; }
.zoom input {
  appearance: none;
  width: 100%; height: 14px; margin: 0;
  background: linear-gradient(#555, #555) 0 50% / 100% 1px no-repeat;
}
.zoom input::-webkit-slider-thumb { appearance: none; width: 5px; height: 12px; background: #555; }
.pct { width: 40px; padding-left: 7px; }
.fit { width: 19px; display: flex; }
```
